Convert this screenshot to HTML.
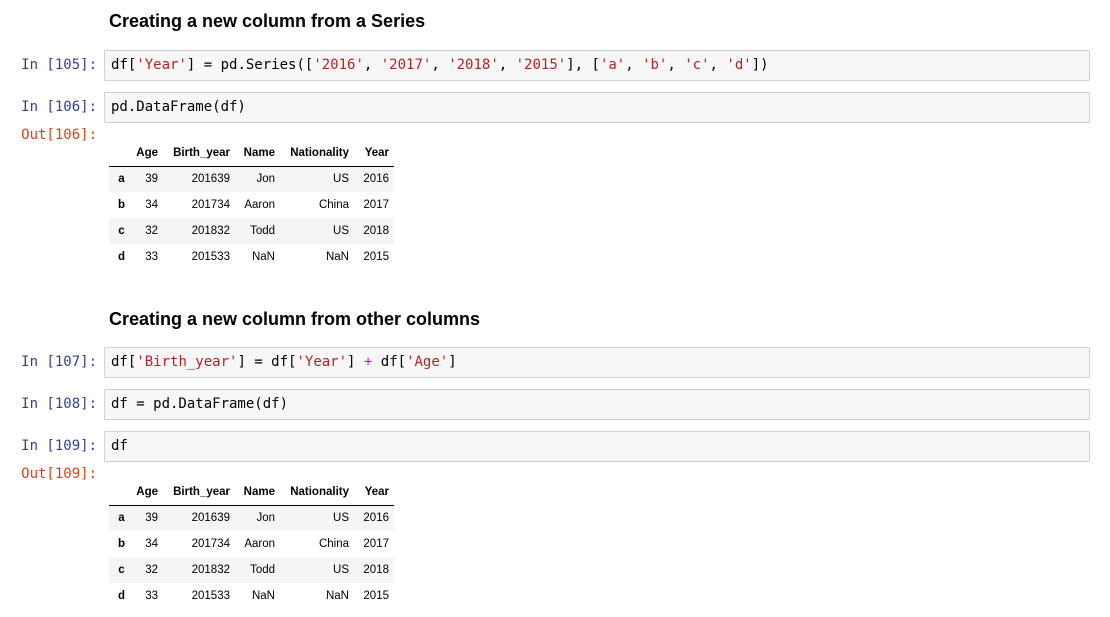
<!DOCTYPE html>
<html><head><style>
body{margin:0;width:1110px;height:617px;background:#fff;position:relative;overflow:hidden;font-family:"Liberation Sans",sans-serif}
.h{position:absolute;left:109px;font-weight:bold;font-size:18px;color:#000;line-height:22px}
.p{position:absolute;left:0;width:97px;text-align:right;font-family:"DejaVu Sans Mono",monospace;font-size:14px;line-height:20px}
.in{color:#303f9f}.out{color:#d84315}
.box{position:absolute;left:104px;width:984px;height:29px;background:#f7f7f7;border:1px solid #cfcfcf;border-radius:2px;font-family:"DejaVu Sans Mono",monospace;font-size:14px;line-height:29px;padding-left:6px;box-sizing:border-box;width:986px;height:31px;color:#000;white-space:pre}
.s{color:#ba2121}.o{color:#aa22ff}
table{position:absolute;left:109px;border-collapse:collapse;font-size:11.5px;color:#000}
td,th{padding:0 5px 0 0;text-align:right;height:26px;box-sizing:border-box}
th{font-weight:bold}
thead th{height:26px;border-bottom:1px solid #000}
tbody th{text-align:center;padding:0}
tbody tr:nth-child(odd){background:#f5f5f5}
</style></head><body>
<div class="h" style="top:10px">Creating a new column from a Series</div>
<div class="p in" style="top:55px">In [105]:</div>
<div class="box" style="top:50px">df[<span class="s">'Year'</span>] = pd.Series([<span class="s">'2016'</span>, <span class="s">'2017'</span>, <span class="s">'2018'</span>, <span class="s">'2015'</span>], [<span class="s">'a'</span>, <span class="s">'b'</span>, <span class="s">'c'</span>, <span class="s">'d'</span>])</div>
<div class="p in" style="top:97px">In [106]:</div>
<div class="box" style="top:92px">pd.DataFrame(df)</div>
<div class="p out" style="top:125px">Out[106]:</div>
<table style="top:140px">
<colgroup><col style="width:25px"><col style="width:29px"><col style="width:72px"><col style="width:45px"><col style="width:74px"><col style="width:40px"></colgroup>
<thead><tr><th></th><th>Age</th><th>Birth_year</th><th>Name</th><th>Nationality</th><th>Year</th></tr></thead>
<tbody>
<tr><th>a</th><td>39</td><td>201639</td><td>Jon</td><td>US</td><td>2016</td></tr>
<tr><th>b</th><td>34</td><td>201734</td><td>Aaron</td><td>China</td><td>2017</td></tr>
<tr><th>c</th><td>32</td><td>201832</td><td>Todd</td><td>US</td><td>2018</td></tr>
<tr><th>d</th><td>33</td><td>201533</td><td>NaN</td><td>NaN</td><td>2015</td></tr>
</tbody></table>
<div class="h" style="top:308px">Creating a new column from other columns</div>
<div class="p in" style="top:352px">In [107]:</div>
<div class="box" style="top:347px">df[<span class="s">'Birth_year'</span>] = df[<span class="s">'Year'</span>] <span class="o">+</span> df[<span class="s">'Age'</span>]</div>
<div class="p in" style="top:394px">In [108]:</div>
<div class="box" style="top:389px">df = pd.DataFrame(df)</div>
<div class="p in" style="top:436px">In [109]:</div>
<div class="box" style="top:431px">df</div>
<div class="p out" style="top:464px">Out[109]:</div>
<table style="top:479px">
<colgroup><col style="width:25px"><col style="width:29px"><col style="width:72px"><col style="width:45px"><col style="width:74px"><col style="width:40px"></colgroup>
<thead><tr><th></th><th>Age</th><th>Birth_year</th><th>Name</th><th>Nationality</th><th>Year</th></tr></thead>
<tbody>
<tr><th>a</th><td>39</td><td>201639</td><td>Jon</td><td>US</td><td>2016</td></tr>
<tr><th>b</th><td>34</td><td>201734</td><td>Aaron</td><td>China</td><td>2017</td></tr>
<tr><th>c</th><td>32</td><td>201832</td><td>Todd</td><td>US</td><td>2018</td></tr>
<tr><th>d</th><td>33</td><td>201533</td><td>NaN</td><td>NaN</td><td>2015</td></tr>
</tbody></table>
</body></html>
